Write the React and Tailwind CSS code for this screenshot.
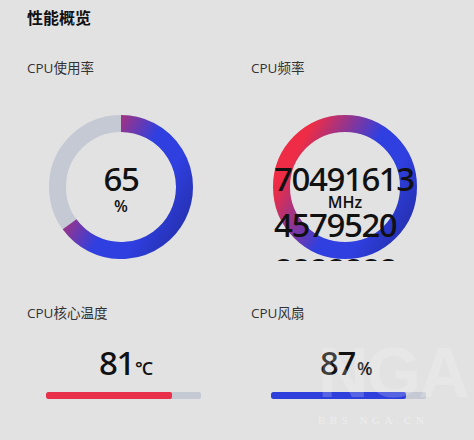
import React from 'react';

const FONT = "font-['Open_Sans','Noto_Sans_CJK_SC',sans-serif]";
const NUM = "font-['Noto_Sans',sans-serif] font-medium text-[33px] tracking-[-1.4px]";

const RingGradient = ({ id }) => (
  <defs>
    <linearGradient id={id} gradientUnits="userSpaceOnUse" x1="20" y1="43" x2="133" y2="106">
      <stop offset="0" stopColor="#ee2c45" />
      <stop offset="0.5" stopColor="#2f3fe0" />
      <stop offset="0.75" stopColor="#2f3fe0" />
      <stop offset="1" stopColor="#2733b8" />
    </linearGradient>
  </defs>
);

const UsageRing = () => (
  <svg width="144" height="144" viewBox="0 0 144 144" className="block">
    <RingGradient id="usage" />
    <circle cx="72" cy="72" r="63.5" fill="none" stroke="#c5c9d3" strokeWidth="17" />
    <path d="M72 8.5A63.5 63.5 0 1 1 20.6 109.3" fill="none" stroke="url(#usage)" strokeWidth="17" />
  </svg>
);

const FreqRing = () => (
  <svg width="144" height="144" viewBox="0 0 144 144" className="block">
    <RingGradient id="freq" />
    <circle cx="72" cy="72" r="63.5" fill="none" stroke="url(#freq)" strokeWidth="17" />
  </svg>
);

const Bar = ({ pct, color, className }) => (
  <div className={`h-[7px] w-[155px] rounded-[2px] bg-[#c5c9d3] overflow-hidden ${className}`}>
    <div className={`h-full rounded-[2px] ${color}`} style={{ width: `${pct}%` }} />
  </div>
);

export default function App() {
  return (
    <div className={`relative h-[440px] w-[474px] overflow-hidden bg-[#e2e2e2] pl-[27px] text-[#111] ${FONT}`}>
      <h1 className="pt-[7px] text-[16px] leading-[22px] font-bold">性能概览</h1>

      <div className="mt-[29px] grid grid-cols-[224px_224px]">
        <div>
          <div className="text-[13.5px] leading-5 text-[#333]">CPU使用率</div>
          <div className="relative mt-[37px] ml-[22px] h-[144px] w-[144px]">
            <UsageRing />
            <div className="absolute inset-0 flex flex-col items-center pt-[42px]">
              <span className={`${NUM} leading-[44px]`}>65</span>
              <span className="-mt-[5px] text-[16px] leading-5 font-semibold">%</span>
            </div>
          </div>
        </div>
        <div>
          <div className="text-[13.5px] leading-5 text-[#333]">CPU频率</div>
          <div className="relative mt-[37px] ml-[22px] h-[144px] w-[144px]">
            <FreqRing />
            <div className={`${NUM} absolute top-[41px] left-[1px] h-[105px] w-[150px] overflow-hidden leading-[45.5px]`}>
              <div>70491613</div>
              <div>4579520</div>
              <div>8888888</div>
            </div>
            <span className="absolute top-[77px] left-0 w-full text-center text-[16px] leading-5 font-semibold">MHz</span>
          </div>
        </div>

        <div className="mt-[44px]">
          <div className="text-[13.5px] leading-5 text-[#333]">CPU核心温度</div>
          <div className="mt-[16px] ml-[72px] flex items-baseline">
            <span className={`${NUM} leading-[48px]`}>81</span>
            <span className="ml-[1px] text-[18px] leading-5 font-semibold tracking-[-1px]">°C</span>
          </div>
          <Bar pct={81} color="bg-[#e8304a]" className="mt-[5px] ml-[19px]" />
        </div>
        <div className="mt-[44px]">
          <div className="text-[13.5px] leading-5 text-[#333]">CPU风扇</div>
          <div className="mt-[16px] ml-[69px] flex items-baseline">
            <span className={`${NUM} leading-[48px]`}>87</span>
            <span className="ml-[2px] text-[18px] leading-5 font-semibold">%</span>
          </div>
          <Bar pct={87} color="bg-[#2f3fdc]" className="mt-[5px] ml-[20px]" />
        </div>
      </div>

      {/* site watermark, sits over the fan card */}
      <div className="absolute top-[335px] left-[318px] w-[146px] text-white/20 font-['Liberation_Sans',sans-serif]">
        <div className="text-[70px] leading-[76px] font-bold tracking-[-2px]">NGA</div>
        <div className="mt-[1px] text-[11px] leading-4 font-['Liberation_Serif',serif] tracking-[4.5px] whitespace-nowrap text-white/40">BBS NGA.CN</div>
      </div>
    </div>
  );
}
